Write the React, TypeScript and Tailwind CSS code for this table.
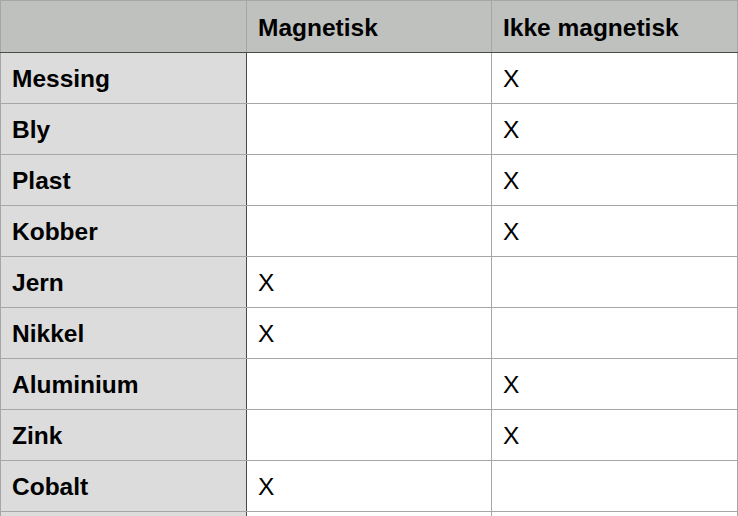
const rows: { name: string; magnetic: boolean | null }[] = [
  { name: "Messing", magnetic: false },
  { name: "Bly", magnetic: false },
  { name: "Plast", magnetic: false },
  { name: "Kobber", magnetic: false },
  { name: "Jern", magnetic: true },
  { name: "Nikkel", magnetic: true },
  { name: "Aluminium", magnetic: false },
  { name: "Zink", magnetic: false },
  { name: "Cobalt", magnetic: true },
  // next row is cut off by the window edge
  { name: "", magnetic: null },
];

export default function App() {
  return (
    <div
      className="w-[738px] h-[516px] overflow-hidden bg-white text-black"
      style={{ fontFamily: '"Liberation Sans", Arial, sans-serif' }}
    >
      <table className="border-collapse table-fixed w-[737px] text-[24.5px] leading-none">
        <colgroup>
          <col className="w-[246px]" />
          <col className="w-[245px]" />
          <col className="w-[246px]" />
        </colgroup>
        <thead>
          <tr className="h-[52px] bg-[#bfc1bf]">
            <th className="border border-[#a6a6a6] border-b-[#4a4a4a] px-[11px] text-left font-bold" />
            <th className="border border-[#a6a6a6] border-b-[#4a4a4a] px-[11px] text-left font-bold pt-[3px]">
              Magnetisk
            </th>
            <th className="border border-[#a6a6a6] border-b-[#4a4a4a] px-[11px] text-left font-bold pt-[3px]">
              Ikke magnetisk
            </th>
          </tr>
        </thead>
        <tbody>
          {rows.map((r, i) => (
            <tr key={i} className="h-[51px]">
              <td className="border border-[#a6a6a6] border-r-[#4a4a4a] bg-[#dcdcdc] px-[11px] pt-[2px] font-bold">
                {r.name}
              </td>
              <td className="border border-[#a6a6a6] border-l-[#4a4a4a] px-[11px] pt-[2px]">
                {r.magnetic === true ? "X" : ""}
              </td>
              <td className="border border-[#a6a6a6] px-[11px] pt-[2px]">{r.magnetic === false ? "X" : ""}</td>
            </tr>
          ))}
        </tbody>
      </table>
    </div>
  );
}
